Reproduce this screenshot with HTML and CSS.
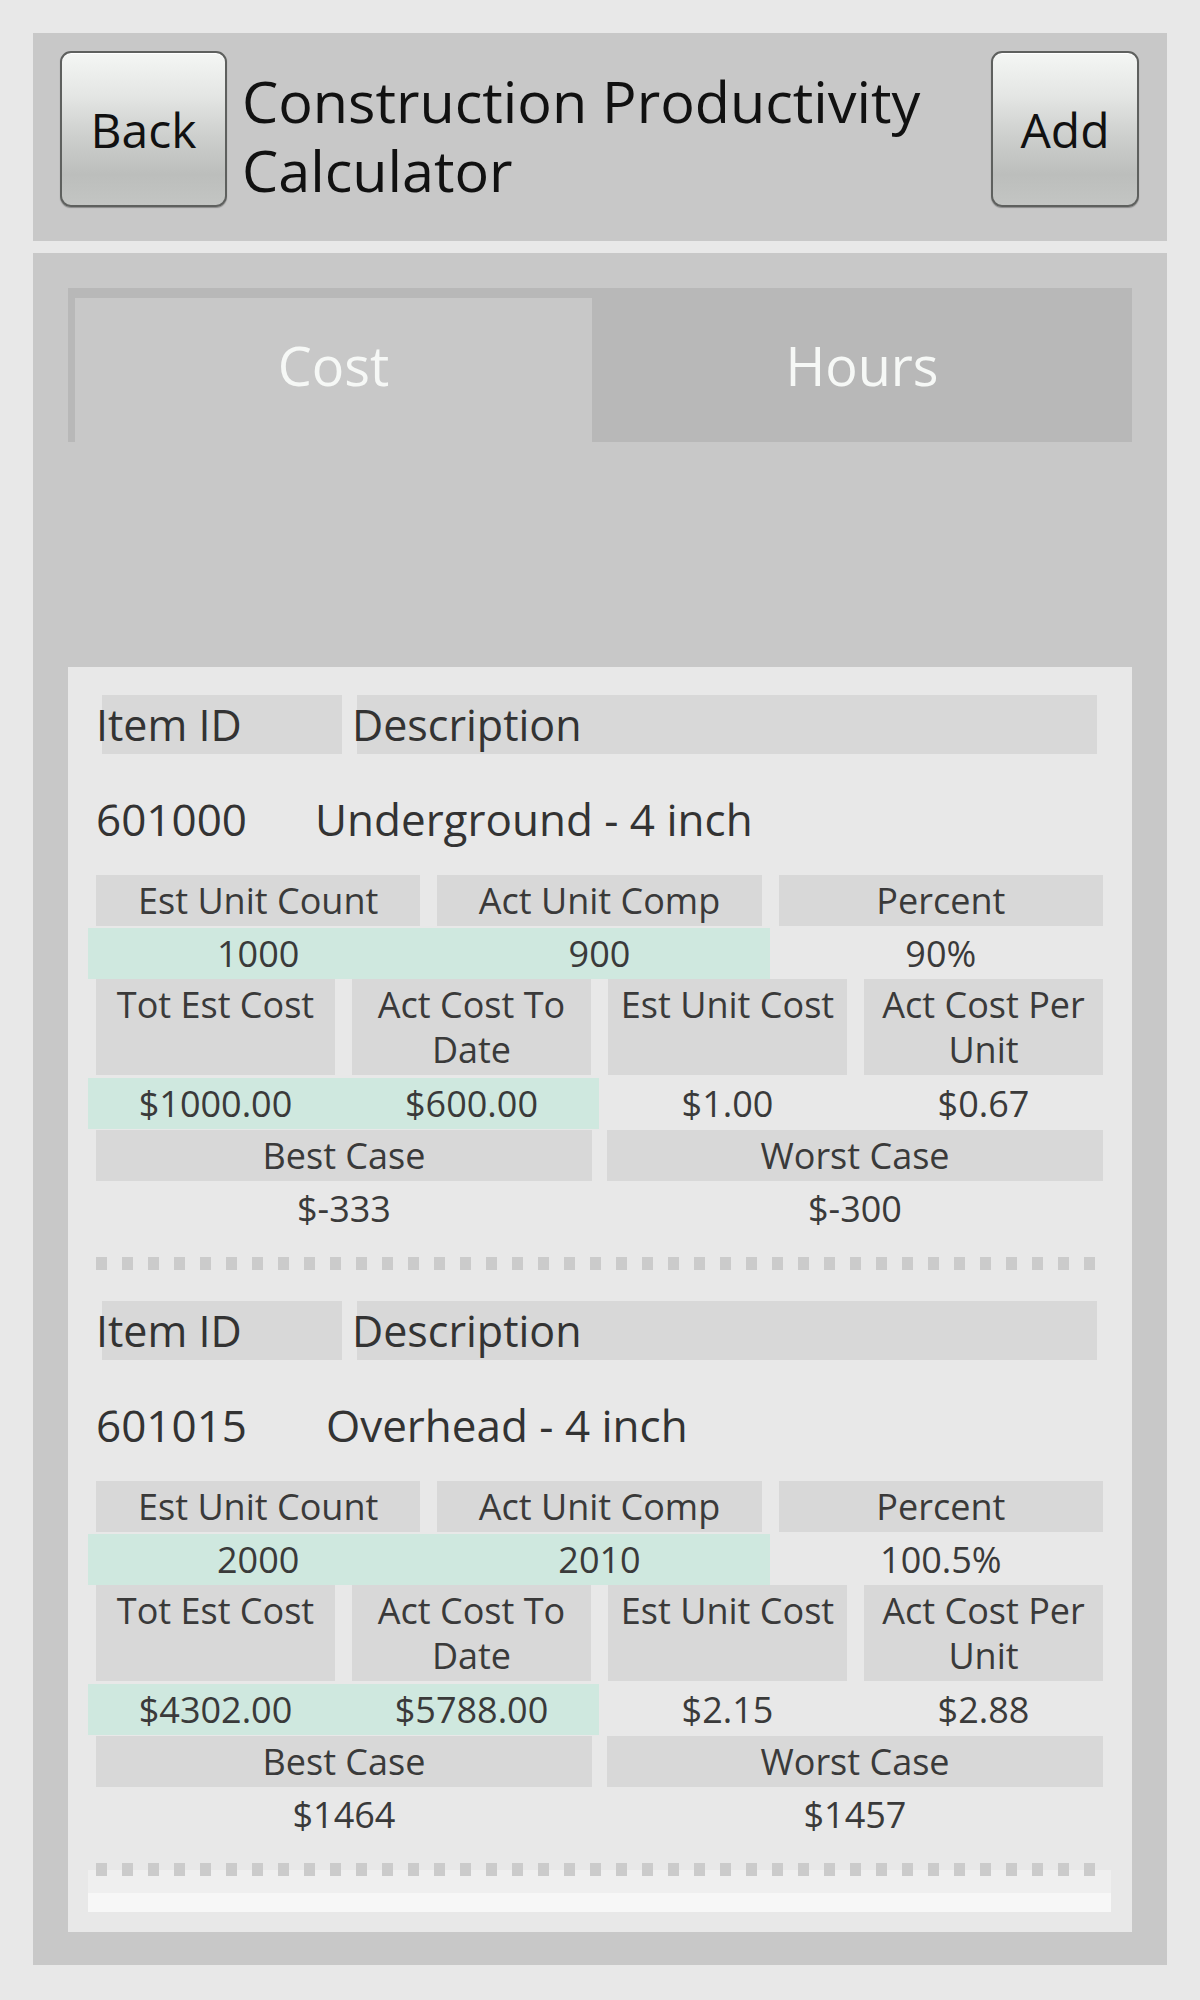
FILE: index.html
```html
<!DOCTYPE html>
<html>
<head>
<meta charset="utf-8">
<title>Construction Productivity Calculator</title>
<link rel="stylesheet" href="styles.css">
</head>
<body>
<div class="header">
  <div class="btn back">Back</div>
  <div class="title">Construction Productivity Calculator</div>
  <div class="btn add">Add</div>
</div>
<div class="main">
  <div class="tabs">
    <div class="tab active">Cost</div>
    <div class="tab">Hours</div>
  </div>
  <div class="list">
    <div class="item">
      <div class="idrow">
        <div class="idlabel">Item ID</div>
        <div class="desclabel">Description</div>
      </div>
      <div class="descrow"><span class="idval">601000</span><span class="descval">Underground - 4 inch</span></div>
      <div class="g3 labels">
        <div class="lab">Est Unit Count</div>
        <div class="lab">Act Unit Comp</div>
        <div class="lab">Percent</div>
      </div>
      <div class="g3 vals">
        <div class="hl"><div>1000</div><div>900</div></div>
        <div>90%</div>
      </div>
      <div class="g4 labels two">
        <div class="lab">Tot Est Cost</div>
        <div class="lab">Act Cost To Date</div>
        <div class="lab">Est Unit Cost</div>
        <div class="lab">Act Cost Per Unit</div>
      </div>
      <div class="g4 vals v2">
        <div class="hl"><div>$1000.00</div><div>$600.00</div></div>
        <div>$1.00</div>
        <div>$0.67</div>
      </div>
      <div class="g2 labels l3">
        <div class="lab">Best Case</div>
        <div class="lab">Worst Case</div>
      </div>
      <div class="g2 vals">
        <div>$-333</div>
        <div>$-300</div>
      </div>
      <div class="dots"></div>
    </div>
    <div class="item last">
      <div class="idrow">
        <div class="idlabel">Item ID</div>
        <div class="desclabel">Description</div>
      </div>
      <div class="descrow"><span class="idval">601015</span><span class="descval wide">Overhead - 4 inch</span></div>
      <div class="g3 labels">
        <div class="lab">Est Unit Count</div>
        <div class="lab">Act Unit Comp</div>
        <div class="lab">Percent</div>
      </div>
      <div class="g3 vals">
        <div class="hl"><div>2000</div><div>2010</div></div>
        <div>100.5%</div>
      </div>
      <div class="g4 labels two">
        <div class="lab">Tot Est Cost</div>
        <div class="lab">Act Cost To Date</div>
        <div class="lab">Est Unit Cost</div>
        <div class="lab">Act Cost Per Unit</div>
      </div>
      <div class="g4 vals v2">
        <div class="hl"><div>$4302.00</div><div>$5788.00</div></div>
        <div>$2.15</div>
        <div>$2.88</div>
      </div>
      <div class="g2 labels l3">
        <div class="lab">Best Case</div>
        <div class="lab">Worst Case</div>
      </div>
      <div class="g2 vals">
        <div>$1464</div>
        <div>$1457</div>
      </div>
      <div class="dots top"></div>
    </div>
    <div class="footer"></div>
  </div>
</div>
</body>
</html>
```

FILE: styles.css
```css
* { box-sizing: border-box; }
html, body { margin: 0; padding: 0; }
body {
  background: #e8e8e8;
  font-family: "Open Sans", "Noto Sans", "DejaVu Sans", sans-serif;
  color: #3a3a3a;
  width: 1200px;
  padding-top: 33px;
}

.header {
  margin-left: 33px;
  width: 1134px;
  height: 208px;
  background: #c8c8c8;
  display: flex;
  align-items: flex-start;
  padding: 18px 28px 0 27px;
}
.btn {
  height: 156px;
  border: 2px solid #5e605e;
  border-radius: 11px;
  background: linear-gradient(#f4f6f4 0%, #e4e6e4 28%, #cdcfcd 55%, #bcbebc 80%, #c3c5c3 100%);
  box-shadow: inset 0 1px 0 #ffffff, 0 1px 1px #8a8a8a;
  display: flex;
  align-items: center;
  justify-content: center;
  font-size: 48px;
  color: #111;
  flex: none;
}
.back { width: 167px; }
.add { width: 148px; }
.title {
  flex: 1;
  margin: 16px 8px 0 15px;
  font-size: 57.5px;
  line-height: 69px;
  color: #111;
}

.main {
  margin: 12px 0 0 33px;
  width: 1134px;
  background: #c8c8c8;
  padding: 35px 35px 33px 35px;
}
.tabs {
  height: 154px;
  background: #b8b8b8;
  display: flex;
  margin-bottom: 225px;
}
.tab {
  flex: 1;
  display: flex;
  align-items: center;
  justify-content: center;
  color: #f6f8f6;
  font-size: 54px;
}
.tab.active {
  flex: 0 0 517px;
  margin: 10px 0 0 7px;
  padding-bottom: 10px;
  background: #c8c8c8;
}

.list {
  background: #e8e8e8;
  padding: 28px 29px 20px 28px;
}
.item { margin-bottom: 31px; }
.item.last { margin-bottom: 0; }

.idrow {
  display: flex;
  height: 59px;
  font-size: 43px;
  line-height: 59px;
  color: #333;
}
.idlabel {
  width: 246px;
  background: linear-gradient(#d8d8d8, #d8d8d8) 6px 0 / calc(100% - 6px) 100% no-repeat;
}
.desclabel {
  margin-left: 10px;
  width: 745px;
  background: linear-gradient(#d8d8d8, #d8d8d8) 5px 0 / calc(100% - 5px) 100% no-repeat;
}
.descrow {
  margin: 36px 0 27px;
  height: 58px;
  line-height: 58px;
  font-size: 44px;
  color: #333;
  white-space: nowrap;
}
.descval { margin-left: 68px; }
.descval.wide { margin-left: 79px; }

.g3, .g4, .g2 { display: grid; column-gap: 17px; }
.g3 { grid-template-columns: repeat(3, 1fr); }
.g4 { grid-template-columns: repeat(4, 1fr); }
.g2 { grid-template-columns: repeat(2, 1fr); column-gap: 15px; }

.labels { font-size: 36px; }
.lab {
  background: #d8d8d8;
  text-align: center;
  line-height: 45px;
  padding: 3px 2px;
}
.labels.two .lab { height: 96px; }
.labels.l3 { margin-top: 1px; }

.vals {
  font-size: 36px;
  line-height: 51px;
  height: 51px;
  margin-top: 2px;
  text-align: center;
}
.vals.v2 { margin-top: 3px; }
.vals .hl {
  grid-column: span 2;
  margin: 0 -8px;
  padding: 0 8px;
  background: #cfe8df;
  display: grid;
  grid-template-columns: 1fr 1fr;
  column-gap: 17px;
}

.dots {
  margin-top: 23px;
  height: 13px;
  background: repeating-linear-gradient(to right, #cbcbcb 0 11px, transparent 11px 26px);
}
.dots.top { position: relative; }
.footer {
  margin: -6px -8px 0;
  height: 42px;
  background: linear-gradient(#efefef 0 23px, #f7f7f7 23px 100%);
}
```
